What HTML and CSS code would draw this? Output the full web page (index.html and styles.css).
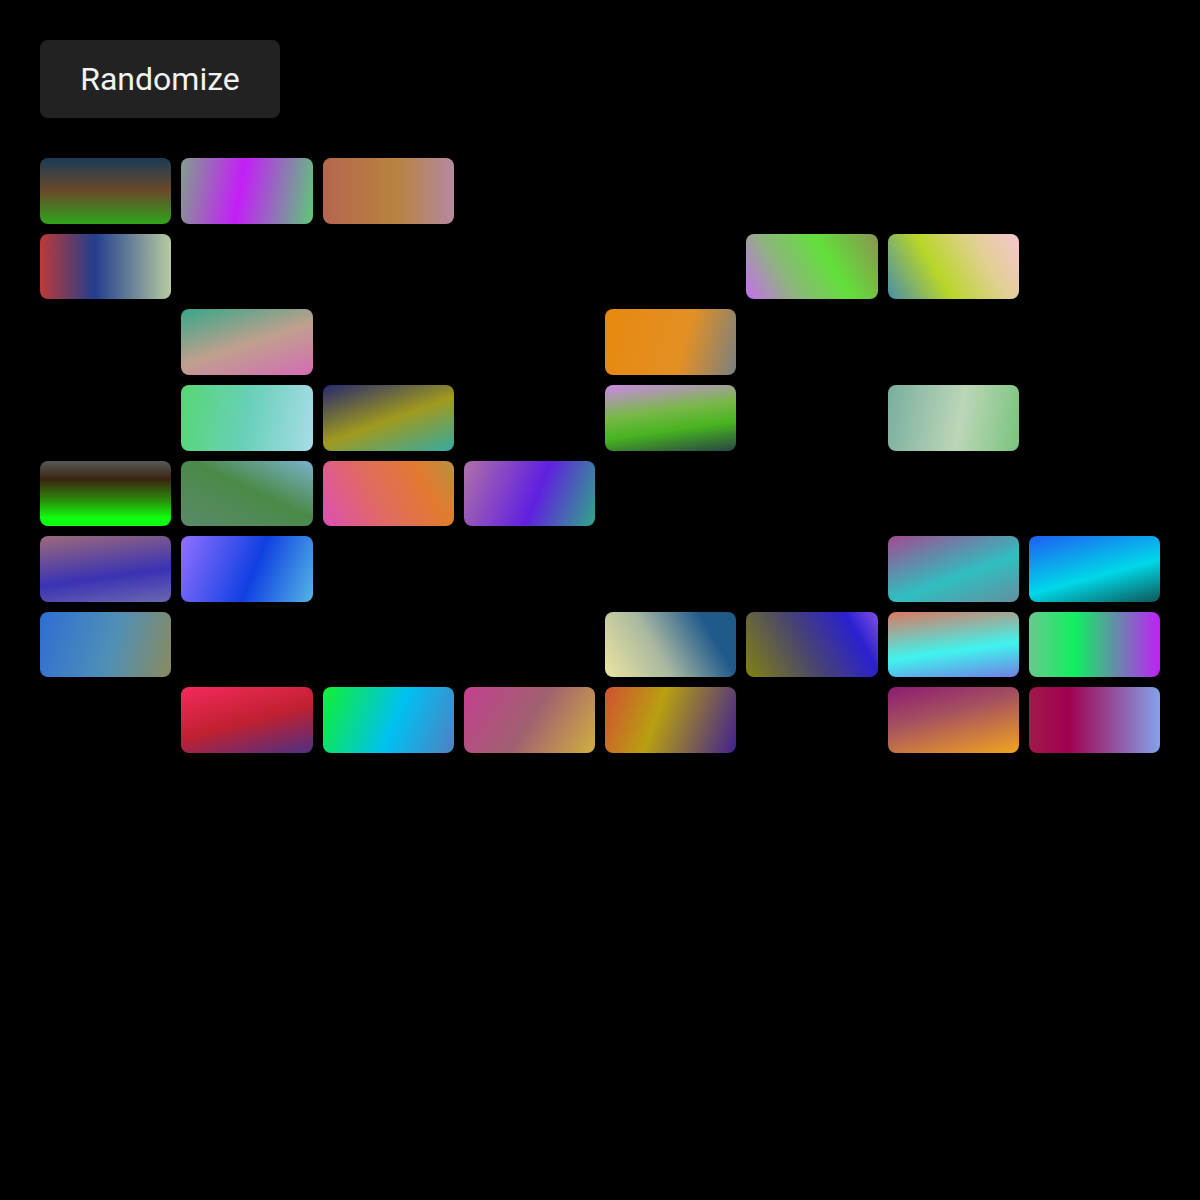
FILE: index.html
```html
<!DOCTYPE html>
<html lang="en">
<head>
<meta charset="utf-8">
<title>Gradients</title>
<link rel="stylesheet" href="styles.css">
</head>
<body>
<main class="page">
  <button class="randomize" type="button">Randomize</button>
  <div class="grid">
    <!-- row 0 -->
    <div class="tile" style="background:linear-gradient(180deg,#1c3a54 0%,#6a4a2a 50%,#2ea41a 100%)"></div>
    <div class="tile" style="background:linear-gradient(100deg,#80a08c 0%,#c41ef8 45%,#5ec878 100%)"></div>
    <div class="tile" style="background:linear-gradient(90deg,#b5664f 0%,#b8823e 55%,#b48aa0 100%)"></div>
    <div class="cell"></div><div class="cell"></div><div class="cell"></div><div class="cell"></div><div class="cell"></div>
    <!-- row 1 -->
    <div class="tile" style="background:linear-gradient(90deg,#bc3a36 0%,#223e8e 42%,#b6cca2 100%)"></div>
    <div class="cell"></div><div class="cell"></div><div class="cell"></div><div class="cell"></div>
    <div class="tile" style="background:linear-gradient(60deg,#c66ef0 0%,#8eb47e 30%,#62e03a 62%,#8a9452 100%)"></div>
    <div class="tile" style="background:linear-gradient(60deg,#4a8ea8 0%,#b8d628 38%,#e0d090 70%,#f6c6d0 100%)"></div>
    <div class="cell"></div>
    <!-- row 2 -->
    <div class="cell"></div>
    <div class="tile" style="background:linear-gradient(162deg,#38a68a 0%,#c0a08e 52%,#d46cb4 100%)"></div>
    <div class="cell"></div><div class="cell"></div>
    <div class="tile" style="background:linear-gradient(105deg,#e8880e 0%,#e29024 60%,#7a8080 100%)"></div>
    <div class="cell"></div><div class="cell"></div><div class="cell"></div>
    <!-- row 3 -->
    <div class="cell"></div>
    <div class="tile" style="background:linear-gradient(100deg,#58d674 0%,#68d0b8 50%,#a8dce8 100%)"></div>
    <div class="tile" style="background:linear-gradient(160deg,#26286e 0%,#a09a1e 52%,#36aaa0 100%)"></div>
    <div class="cell"></div>
    <div class="tile" style="background:linear-gradient(172deg,#cc88e6 0%,#78b848 40%,#48b420 65%,#284444 100%)"></div>
    <div class="cell"></div>
    <div class="tile" style="background:linear-gradient(100deg,#78ae9e 0%,#bcd6b8 55%,#78c47c 100%)"></div>
    <div class="cell"></div>
    <!-- row 4 -->
    <div class="tile" style="background:linear-gradient(180deg,#585858 0%,#3a2410 28%,#2a8a0a 60%,#10ff10 88%)"></div>
    <div class="tile" style="background:linear-gradient(205deg,#7ab2cc 0%,#4a8a48 45%,#5a8a6a 100%)"></div>
    <div class="tile" style="background:linear-gradient(62deg,#dc50b4 0%,#e06a62 40%,#e27a30 75%,#b89040 100%)"></div>
    <div class="tile" style="background:linear-gradient(112deg,#b070a8 0%,#6020e0 55%,#30a888 100%)"></div>
    <div class="cell"></div><div class="cell"></div><div class="cell"></div><div class="cell"></div>
    <!-- row 5 -->
    <div class="tile" style="background:linear-gradient(172deg,#9c6a7a 0%,#3a32b4 60%,#6a68b0 100%)"></div>
    <div class="tile" style="background:linear-gradient(112deg,#9270ff 0%,#1040e2 55%,#54b6e4 100%)"></div>
    <div class="cell"></div><div class="cell"></div><div class="cell"></div><div class="cell"></div>
    <div class="tile" style="background:linear-gradient(160deg,#a24a8e 0%,#30bec0 58%,#6290a0 100%)"></div>
    <div class="tile" style="background:linear-gradient(165deg,#1e5ef2 0%,#00d8e8 58%,#0e5656 100%)"></div>
    <!-- row 6 -->
    <div class="tile" style="background:linear-gradient(105deg,#2e6ed2 0%,#5090b6 55%,#8a8a5e 100%)"></div>
    <div class="cell"></div><div class="cell"></div><div class="cell"></div>
    <div class="tile" style="background:linear-gradient(60deg,#ece4a0 0%,#a8b8a0 40%,#205a8c 78%,#1e5a86 100%)"></div>
    <div class="tile" style="background:linear-gradient(60deg,#828210 0%,#484470 45%,#2a20d0 80%,#8050e2 100%)"></div>
    <div class="tile" style="background:linear-gradient(172deg,#dc7860 0%,#40f4ee 58%,#7080e4 100%)"></div>
    <div class="tile" style="background:linear-gradient(90deg,#6ac88e 0%,#10f060 35%,#c020f8 100%)"></div>
    <!-- row 7 -->
    <div class="cell"></div>
    <div class="tile" style="background:linear-gradient(165deg,#f42a5c 0%,#c02030 52%,#4e3082 100%)"></div>
    <div class="tile" style="background:linear-gradient(112deg,#10f030 0%,#00c0f2 55%,#5080c0 100%)"></div>
    <div class="tile" style="background:linear-gradient(122deg,#c44090 0%,#a06070 50%,#d0b040 100%)"></div>
    <div class="tile" style="background:linear-gradient(110deg,#d25032 0%,#b8a010 40%,#402090 100%)"></div>
    <div class="cell"></div>
    <div class="tile" style="background:linear-gradient(165deg,#8e1a72 0%,#a45060 40%,#f2a420 100%)"></div>
    <div class="tile" style="background:linear-gradient(90deg,#a01a4a 0%,#a00050 30%,#84a2ea 100%)"></div>
  </div>
</main>
</body>
</html>
```

FILE: styles.css
```css
html, body {
  margin: 0;
  padding: 0;
  background: #000;
}

body {
  font-family: Roboto, "Liberation Sans", Arial, sans-serif;
  color: #f2f2f2;
}

.page {
  padding: 40px;
  display: flex;
  flex-direction: column;
  align-items: flex-start;
  gap: 40px;
}

.randomize {
  font-family: Roboto, "Liberation Sans", Arial, sans-serif;
  font-size: 32px;
  line-height: 38px;
  padding: 20px 0;
  width: 240px;
  text-align: center;
  background: #222222;
  color: #f2f2f2;
  border: none;
  border-radius: 8px;
  cursor: pointer;
}

.grid {
  align-self: stretch;
  display: grid;
  grid-template-columns: repeat(8, 1fr);
  gap: 10px;
}

.tile,
.cell {
  aspect-ratio: 2 / 1;
  border-radius: 8px;
}
```
